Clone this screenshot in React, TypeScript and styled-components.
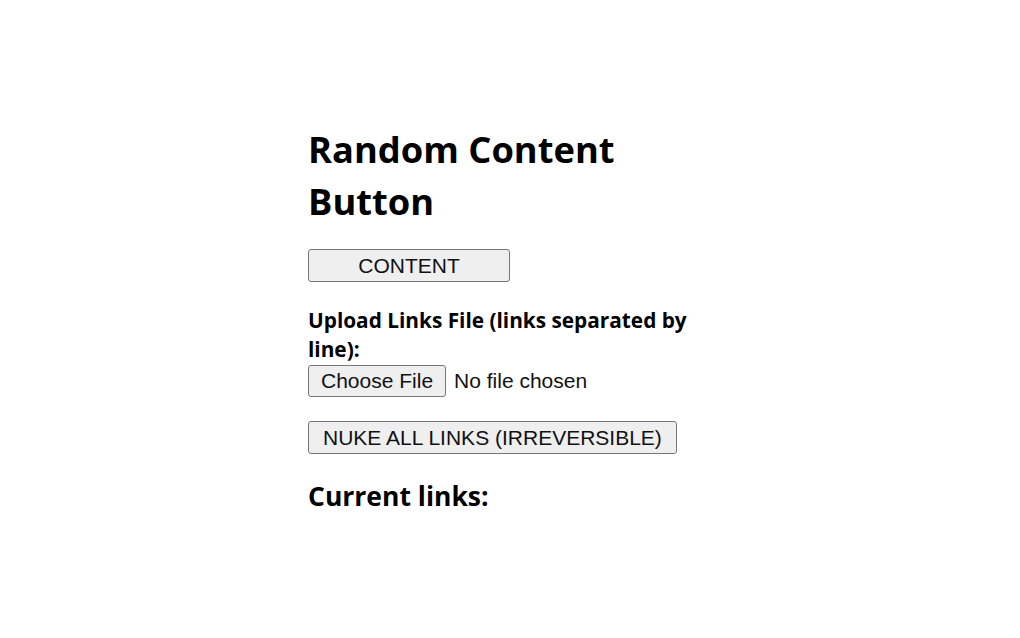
import styled, { createGlobalStyle } from "styled-components";

const GlobalStyle = createGlobalStyle`
    body {
        margin: 0;
        background: #ffffff;
        color: #000000;
        font-family: "Open Sans", "Noto Sans", sans-serif;
    }
`;

const StyledMain = styled.main`
    width: 404px;
    margin: 0 auto;
    padding-top: 123px;
    display: flex;
    flex-direction: column;
    align-items: flex-start;
`;

const StyledTitle = styled.h1`
    font-size: 36.3px;
    line-height: 52px;
    font-weight: 700;
    margin: 0 0 22px;
`;

const StyledButton = styled.button<{ $width?: number }>`
    width: ${(p) => (p.$width ? `${p.$width}px` : "auto")};
    height: 33px;
    padding: 0 14px;
    font-family: "Liberation Sans", Arial, sans-serif;
    font-size: 21px;
    color: #111111;
    background-color: #efefef;
    border: 1px solid #767676;
    border-radius: 3px;
`;

const StyledLabel = styled.label`
    display: block;
    margin-top: 24px;
    font-size: 20.8px;
    line-height: 29px;
    font-weight: 700;
`;

const StyledFileRow = styled.div`
    display: flex;
    align-items: center;
    gap: 8px;
    font-family: "Liberation Sans", Arial, sans-serif;
    font-size: 21px;
    color: #111111;
    margin: 1px 0 24px;
`;

const StyledFileButton = styled(StyledButton)`
    height: 32px;
    padding: 0 12px;
`;

const StyledHeading = styled.h3`
    font-size: 26.5px;
    line-height: 34px;
    font-weight: 700;
    margin: 25px 0 0;
`;

export default function App() {
    return (
        <>
            <GlobalStyle />
            <StyledMain>
                <StyledTitle>Random Content Button</StyledTitle>
                <StyledButton $width={202}>CONTENT</StyledButton>
                <StyledLabel htmlFor="links">Upload Links File (links separated by line):</StyledLabel>
                <StyledFileRow>
                    <StyledFileButton id="links">Choose File</StyledFileButton>
                    <span>No file chosen</span>
                </StyledFileRow>
                <StyledButton>NUKE ALL LINKS (IRREVERSIBLE)</StyledButton>
                <StyledHeading>Current links:</StyledHeading>
            </StyledMain>
        </>
    );
}
